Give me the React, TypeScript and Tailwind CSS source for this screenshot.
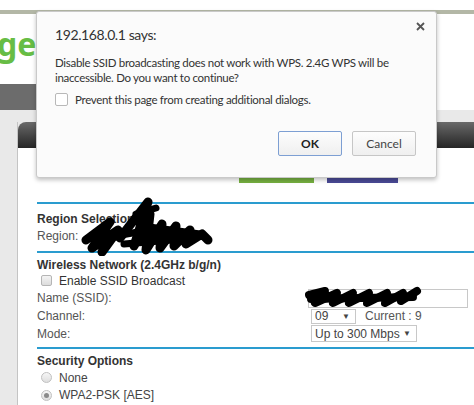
import React from 'react';

function RegionScribble() {
  return (
    <svg className="absolute left-[76px] top-[194px]" width="140" height="62" viewBox="0 0 140 62">
      <path
        d="M10 46 L34 28 L16 54 L42 36 L26 58 M44 44 L72 8 L58 52 L74 20 L70 56 L86 30 L84 54 L100 32 L98 52 L114 36 L110 50 L126 40 L132 46"
        fill="none"
        stroke="#000"
        strokeWidth="9"
        strokeLinecap="round"
        strokeLinejoin="round"
      />
      <path d="M28 44 L62 38 M66 32 L124 40 M60 20 L80 14 M48 50 L96 46" fill="none" stroke="#000" strokeWidth="7" strokeLinecap="round" />
    </svg>
  );
}

function SsidScribble() {
  return (
    <svg className="absolute left-[303px] top-[285px]" width="122" height="24" viewBox="0 0 122 24">
      <path
        d="M6 10 L22 6 L12 18 L34 8 L30 18 L50 8 L46 18 L66 8 L64 18 L84 8 L82 18 L100 8 L98 16 L114 6"
        fill="none"
        stroke="#000"
        strokeWidth="8"
        strokeLinecap="round"
        strokeLinejoin="round"
      />
      <path d="M8 14 L110 12" fill="none" stroke="#000" strokeWidth="8" strokeLinecap="round" />
    </svg>
  );
}

function Row({ label, children, h }: { label: string; children?: React.ReactNode; h: string }) {
  return (
    <div className={`grid grid-cols-[272px_1fr] items-center ${h}`}>
      <span className="text-[#555]">{label}</span>
      <div className="flex items-center">{children}</div>
    </div>
  );
}

function Select({ value, w }: { value: string; w: string }) {
  return (
    <div className={`flex items-center justify-between border border-[#c8c8c8] bg-white pl-[3px] pr-[5px] text-[#444] ${w}`}>
      <span>{value}</span>
      <span className="text-[8px]">▼</span>
    </div>
  );
}

export default function App() {
  return (
    <div className="relative h-[405px] w-[474px] overflow-hidden bg-white text-[12px] leading-none" style={{ fontFamily: '"Liberation Sans", Arial, sans-serif' }}>
      <div className="h-[10px]" />
      <div className="h-[4px] bg-[#b3b7a6]" />
      <div className="h-[70px] overflow-hidden pt-[14px]">
        <span className="-ml-[3px] text-[32px] font-bold leading-none text-[#67bd45]" style={{ fontFamily: '"Noto Sans", sans-serif' }}>
          ge
        </span>
      </div>
      <div className="h-[26px] w-[220px] rounded-tr-[6px] bg-[#6c6c6c]" />
      <div className="flex h-[295px] flex-col bg-[#e9e9e9] pl-[17px] pt-[12px]">
        <div className="flex flex-1 flex-col border-l border-[#c4c4c4]">
          <div className="h-[26px] rounded-tl-[8px] bg-gradient-to-b from-[#6a6a6a] to-[#262626]" />
          <div className="flex-1 bg-white pl-[19px]">
            <div className="flex h-[35px] items-end gap-[13px] pl-[202px]">
              <div className="h-[27px] w-[75px] bg-[#76b041]" />
              <div className="h-[27px] w-[71px] bg-[#4a4a96]" />
            </div>
            <div className="h-[19px]" />
            {/* Region */}
            <div className="border-t-2 border-[#2a9ccf] pt-[7px] pb-[6px]">
              <div className="h-[16px] leading-[16px] font-bold text-[#333]">Region Selection</div>
              <div className="h-[18px] leading-[18px] text-[#555]">Region:</div>
            </div>
            {/* Wireless */}
            <div className="border-t-2 border-[#2a9ccf] pt-[4px] pb-[4px]">
              <div className="h-[16px] leading-[16px] font-bold text-[#333]">Wireless Network (2.4GHz b/g/n)</div>
              <div className="flex h-[15px] items-center gap-[7px] pl-[4px]">
                <span className="h-[11px] w-[11px] rounded-[2px] border border-[#b5b5b5] bg-gradient-to-b from-[#f4f4f4] to-[#dcdcdc]" />
                <span className="text-[#333]">Enable SSID Broadcast</span>
              </div>
              <Row label="Name (SSID):" h="h-[20px]">
                <div className="-ml-[1px] h-[19px] w-[160px] border border-[#c8c8c8] bg-white" />
              </Row>
              <Row label="Channel:" h="h-[16px]">
                <div className="flex items-center">
                  <div className="ml-[2px] h-[15px] leading-[13px]">
                    <Select value="09" w="w-[45px] h-[15px]" />
                  </div>
                  <span className="ml-[9px] text-[#555]">Current : 9</span>
                </div>
              </Row>
              <Row label="Mode:" h="h-[19px]">
                <div className="ml-[2px]">
                  <Select value="Up to 300 Mbps" w="w-[106px] h-[17px]" />
                </div>
              </Row>
            </div>
            {/* Security */}
            <div className="border-t-2 border-[#2a9ccf] pt-[4px]">
              <div className="h-[16px] leading-[16px] font-bold text-[#333]">Security Options</div>
              <div className="flex h-[17px] items-center gap-[7px] pl-[4px]">
                <span className="h-[11px] w-[11px] rounded-full border border-[#c0c0c0] bg-gradient-to-b from-[#f6f6f6] to-[#dedede]" />
                <span className="text-[#444]">None</span>
              </div>
              <div className="flex h-[18px] items-center gap-[7px] pl-[4px]">
                <span className="flex h-[11px] w-[11px] items-center justify-center rounded-full border border-[#c0c0c0] bg-gradient-to-b from-[#f6f6f6] to-[#dedede]">
                  <span className="h-[5px] w-[5px] rounded-full bg-[#8a8a8a]" />
                </span>
                <span className="text-[#444]">WPA2-PSK [AES]</span>
              </div>
            </div>
          </div>
        </div>
      </div>

      <RegionScribble />
      <SsidScribble />

      {/* alert dialog */}
      <div
        className="absolute left-[36px] top-[11px] flex h-[167px] w-[401px] flex-col rounded-[3px] border border-[#c9c9c9] bg-[#fbfbfb] px-[18px] shadow-[0_2px_4px_rgba(0,0,0,0.25)]"
        style={{ fontFamily: 'Lato, "Open Sans", sans-serif' }}
      >
        <button className="absolute right-[8px] top-[6px] flex h-[16px] w-[16px] items-center justify-center text-[#555]">
          <svg width="9" height="9" viewBox="0 0 9 9">
            <path d="M1 1 L8 8 M8 1 L1 8" stroke="#555" strokeWidth="1.8" />
          </svg>
        </button>
        <div className="mt-[13px] whitespace-nowrap text-[14px] leading-[20px] tracking-[-0.4px] text-[#333]">192.168.0.1 says:</div>
        <div className="mt-[10px] whitespace-nowrap text-[11.5px] leading-[15px] tracking-[-0.3px] text-[#333]">
          Disable SSID broadcasting does not work with WPS. 2.4G WPS will be
          <br />
          inaccessible. Do you want to continue?
        </div>
        <div className="mt-[7px] flex items-center gap-[7px]">
          <span className="h-[13px] w-[13px] rounded-[2px] border border-[#b8b8b8] bg-white" />
          <span className="whitespace-nowrap text-[11.5px] leading-[15px] tracking-[-0.3px] text-[#333]">Prevent this page from creating additional dialogs.</span>
        </div>
        <div className="mt-[24px] flex justify-end gap-[10px] pr-[2px]">
          <button className="h-[25px] w-[64px] rounded-[2px] border border-[#7d9fd3] bg-gradient-to-b from-[#fdfdfd] to-[#efefef] text-[12px] font-bold text-[#222]">
            OK
          </button>
          <button className="h-[25px] w-[64px] rounded-[2px] border border-[#c6c6c6] bg-gradient-to-b from-[#fdfdfd] to-[#efefef] text-[12px] text-[#444]">
            Cancel
          </button>
        </div>
      </div>
    </div>
  );
}
